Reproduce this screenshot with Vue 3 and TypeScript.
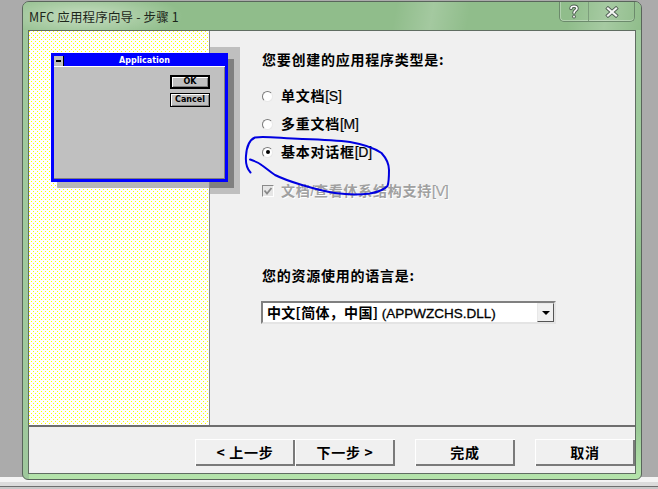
<script setup lang="ts">
const types = [
  { label: '单文档', key: '[S]', checked: false },
  { label: '多重文档', key: '[M]', checked: false },
  { label: '基本对话框', key: '[D]', checked: true },
]
const buttons = [
  { label: '< 上一步', cls: 'b-back' },
  { label: '下一步 >', cls: 'b-next' },
  { label: '完成', cls: 'b-finish' },
  { label: '取消', cls: 'b-cancel' },
]
</script>

<template>
  <div class="page">
    <div class="task-strip"></div>
    <div class="window">
      <div class="titlebar">
        <span class="title">MFC 应用程序向导 - 步骤 1</span>
        <div class="caption-btns">
          <span class="cap cap-help">
            <svg width="12" height="15" viewBox="0 0 12 15">
              <g fill="none" stroke-linecap="round">
                <path d="M3 4.500 C3 1.500 9 1.500 9 4.500 C9 6.500 6 6.500 6 9" stroke="#4c5a50" stroke-width="3.400" />
                <path d="M6 12.500 L6 12.700" stroke="#4c5a50" stroke-width="3.600" />
                <path d="M3 4.500 C3 1.500 9 1.500 9 4.500 C9 6.500 6 6.500 6 9" stroke="#fff" stroke-width="1.600" />
                <path d="M6 12.500 L6 12.700" stroke="#fff" stroke-width="1.800" />
              </g>
            </svg>
          </span>
          <span class="cap cap-close">
            <svg width="14" height="12" viewBox="0 0 14 12">
              <g fill="none" stroke-linecap="square">
                <path d="M3 2.500 L11 9.500 M11 2.500 L3 9.500" stroke="#4c5a50" stroke-width="3.800" />
                <path d="M3 2.500 L11 9.500 M11 2.500 L3 9.500" stroke="#f4f6f4" stroke-width="2.200" />
              </g>
            </svg>
          </span>
        </div>
      </div>
      <div class="client">
        <div class="main">
          <div class="left">
            <div class="mini-strip"></div>
            <div class="mini">
              <div class="mini-title">
                <span class="mini-sys"><i></i></span>
                <span class="mini-name">Application</span>
              </div>
              <div class="mini-body">
                <span class="mini-btn mini-ok">OK</span>
                <span class="mini-btn">Cancel</span>
              </div>
            </div>
          </div>
          <div class="right">
            <div class="shadow-light"></div>
            <div class="shadow-dark"></div>
            <div class="heading">您要创建的应用程序类型是:</div>
            <div class="radios">
              <div v-for="t in types" :key="t.label" class="radio-row">
                <span class="radio" :class="{ on: t.checked }"></span>
                <span class="opt">{{ t.label }}<span class="latin">{{ t.key }}</span></span>
              </div>
            </div>
            <div class="check-row">
              <span class="check">
                <svg width="10" height="10" viewBox="0 0 10 10"><path d="M1.500 4.500 L4 7.500 L8.500 2" fill="none" stroke="#8a8a8a" stroke-width="1.800" /></svg>
              </span>
              <span class="opt disabled">文档<span class="latin">/</span>查看体系结构支持<span class="latin">[V]</span></span>
            </div>
            <div class="heading lang">您的资源使用的语言是:</div>
            <div class="combo">
              <span class="combo-text">中文[简体，中国] <span class="latin latin-combo">(APPWZCHS.DLL)</span></span>
              <span class="combo-btn"><i></i></span>
            </div>
          </div>
        </div>
        <div class="bottom">
          <button v-for="b in buttons" :key="b.label" class="btn" :class="b.cls">{{ b.label }}</button>
        </div>
      </div>
    </div>
    <svg class="scribble" width="658" height="489" viewBox="0 0 658 489">
      <path d="M250.500 172.500 C246 168 245.500 162 246 156 C246.500 148 249 140 255 137.500 C264 136 278 138 302 139 C318 139.500 335 140 350 142 C362 144 374 148 381.500 153 C386 158 389 163 389 170 C389 177 389 182 387.500 186 C384 190 378 192 370 193.500 C358 195 346 194.500 335 193 C322 191 312 188 302 185 C292 182 283 179 275 175 C270 172 266 168 261.500 165 C258 162 254 161 250 159.500" fill="none" stroke="#0000e0" stroke-width="2" stroke-linecap="round" />
    </svg>
  </div>
</template>

<style>
html, body { margin: 0; padding: 0; background: #ababab; }
</style>

<style scoped>
.page {
  position: relative;
  width: 658px;
  height: 489px;
  overflow: hidden;
  background: #ababab;
  font-family: "Noto Sans CJK SC", "Liberation Sans", sans-serif;
  padding: 1px 0 0 22px;
  box-sizing: border-box;
}
.task-strip {
  position: absolute;
  left: 0;
  right: 0;
  top: 477px;
  height: 12px;
  background: linear-gradient(#f4f4f4 0 5px, #dcdcdc 5px 9px, #6e6e6e 9px 10px, #c8c8c8 10px);
}
.window {
  position: relative;
  width: 620px;
  height: 479px;
  box-sizing: border-box;
  border: 1px solid #59655b;
  border-radius: 7px 7px 6px 6px;
  padding: 0 5px 5px;
  background: linear-gradient(90deg, #9fc89c 0 6px, transparent 6px), linear-gradient(#a3cca1 0%, #9cc79a 40%, #88ba84 60%, #9ccb98 90%, #b5e4ab 100%);
}
.titlebar {
  display: flex;
  justify-content: space-between;
  height: 28px;
  margin: 0 -5px;
  padding: 0 6px;
  border-radius: 6px 6px 0 0;
  background:
    radial-gradient(ellipse 100px 24px at 60px 14px, rgba(220, 235, 215, 0.7), transparent),
    linear-gradient(100deg, transparent 60%, rgba(255, 255, 255, 0.18) 66%, transparent 72%, transparent 88%, rgba(255, 255, 255, 0.2) 94%, transparent),
    #90bd8b;
}
.title {
  font-size: 12.500px;
  line-height: 30px;
  letter-spacing: 0.15px;
  color: #1c261a;
}
.caption-btns {
  display: flex;
  height: 20px;
  box-sizing: border-box;
  border: 1px solid #6c8a6c;
  border-top: none;
  border-radius: 0 0 5px 5px;
  box-shadow: inset 0 -1px 0 rgba(255, 255, 255, 0.3), inset 1px 0 0 rgba(255, 255, 255, 0.3);
}
.cap {
  display: flex;
  align-items: center;
  justify-content: center;
}
.cap-help {
  width: 28px;
  border-right: 1px solid #7d9e7c;
}
.cap-close {
  width: 45px;
}
.client {
  display: flex;
  flex-direction: column;
  width: 608px;
  height: 444px;
  box-sizing: border-box;
  border: 1px solid #606d62;
  background: #f0f0f0;
}
.main {
  display: flex;
  height: 394px;
  border-bottom: 2px solid #6e6e6e;
  box-sizing: content-box;
}
.left {
  position: relative;
  z-index: 1;
  width: 181px;
  box-sizing: border-box;
  padding: 22px 0 0 22px;
  border-right: 1px solid #8a8a8a;
  background-color: #ffffff;
  background-image:
    conic-gradient(at 1px 1px, transparent 270deg, #ffff00 270deg),
    conic-gradient(at 1px 1px, transparent 270deg, #ffff00 270deg);
  background-size: 4px 4px;
  background-position: 0 0, 2px 2px;
}
.mini-strip {
  position: absolute;
  left: 28px;
  top: 151px;
  width: 152px;
  height: 6px;
  background: #b7b7b7;
}
.mini {
  position: relative;
  width: 177px;
  height: 129px;
  box-sizing: border-box;
  border: 3px solid #0000ff;
  display: flex;
  flex-direction: column;
  background: #c0c0c0;
  box-shadow: inset -1px -1px 0 #808080;
  font-family: "DejaVu Sans", sans-serif;
  font-weight: 700;
  color: #000;
}
.mini-title {
  position: relative;
  display: flex;
  align-items: center;
  height: 10px;
  background: #0000ff;
  border-bottom: 1px solid #fff;
  color: #fff;
}
.mini-sys {
  display: flex;
  align-items: center;
  justify-content: center;
  width: 9px;
  height: 10px;
  background: #c0c0c0;
  border-right: 1px solid #000;
}
.mini-sys i {
  display: block;
  width: 5px;
  height: 2px;
  background: #000;
}
.mini-name {
  flex: 1;
  text-align: center;
  font-size: 8px;
  line-height: 10px;
}
.mini-body {
  display: flex;
  flex-direction: column;
  align-items: flex-end;
  gap: 4px;
  padding: 8px 15px 0 0;
}
.mini-btn {
  width: 40px;
  height: 14px;
  box-sizing: border-box;
  border: 1px solid #000;
  text-align: center;
  font-size: 8px;
  line-height: 12px;
  box-shadow: inset 1px 1px 0 #fff, inset -1px -1px 0 #808080;
}
.mini-ok {
  border-width: 2px;
  line-height: 10px;
}
.right {
  position: relative;
  flex: 1;
  padding: 19px 0 0 52px;
  box-sizing: border-box;
  color: #000;
}
.shadow-light {
  position: absolute;
  left: 0;
  top: 16px;
  width: 30px;
  height: 147px;
  background: #bfbfbf;
}
.shadow-dark {
  position: absolute;
  left: 0;
  top: 28px;
  width: 24px;
  height: 129px;
  background: #808080;
}
.heading {
  position: relative;
  font-size: 14px;
  font-weight: 700;
  line-height: 18px;
  letter-spacing: 0.75px;
}
.radios {
  margin-top: 14px;
}
.radio-row {
  display: flex;
  align-items: center;
  height: 28px;
}
.radio {
  position: relative;
  width: 11px;
  height: 11px;
  margin-right: 8px;
  box-sizing: border-box;
  border-radius: 50%;
  border: 1px solid;
  border-color: #7a7a7a #e8e8e8 #e8e8e8 #7a7a7a;
  background: #fff;
}
.radio.on::after {
  content: "";
  position: absolute;
  left: 2.500px;
  top: 2.500px;
  width: 4px;
  height: 4px;
  border-radius: 50%;
  background: #000;
}
.opt {
  font-size: 14px;
  font-weight: 700;
  line-height: 18px;
  letter-spacing: 0.75px;
  margin-top: -2px;
}
.check-row {
  display: flex;
  align-items: center;
  height: 18px;
  margin-top: 16px;
}
.check {
  width: 12px;
  height: 12px;
  box-sizing: border-box;
  margin-right: 7px;
  border: 1px solid;
  border-color: #8a8a8a #fff #fff #8a8a8a;
  background: #e6e6e6;
  display: flex;
}
.disabled {
  color: #a0a0a0;
  text-shadow: 1px 1px 0 #fff;
}
.lang {
  margin-top: 66px;
}
.combo {
  display: flex;
  justify-content: space-between;
  width: 295px;
  height: 23px;
  box-sizing: border-box;
  margin: 17px 0 0 -1px;
  border: 2px solid;
  border-color: #808080 #e4e4e4 #e4e4e4 #808080;
  background: #fff;
}
.combo-text {
  padding-left: 4px;
  font-size: 14px;
  font-weight: 700;
  line-height: 19px;
  letter-spacing: 0.3px;
  white-space: nowrap;
}
.latin {
  font-family: "Liberation Sans", sans-serif;
  font-weight: 400;
  font-size: 14px;
  letter-spacing: -0.3px;
  -webkit-text-stroke: 0.2px currentColor;
}
.latin-combo {
  font-size: 13.500px;
  letter-spacing: 0;
  -webkit-text-stroke: 0.3px currentColor;
}
.combo-btn {
  display: flex;
  align-items: center;
  justify-content: center;
  width: 17px;
  height: 19px;
  box-sizing: border-box;
  border: 1px solid;
  border-color: #e8e8e8 #555 #555 #e8e8e8;
  background: #f0f0f0;
}
.combo-btn i {
  width: 0;
  height: 0;
  border-left: 4px solid transparent;
  border-right: 4px solid transparent;
  border-top: 4px solid #000;
}
.bottom {
  display: flex;
  justify-content: flex-end;
  align-items: flex-start;
  flex: 1;
  padding-top: 12px;
}
.btn {
  width: 100px;
  height: 27px;
  padding: 0 0 2px;
  border: 0;
  font-family: inherit;
  font-size: 14px;
  font-weight: 700;
  letter-spacing: 0.75px;
  color: #000;
  background: #f0f0f0;
  box-shadow: inset 1px 1px 0 #fff, inset -2px -2px 0 #7a7a7a;
}
.b-finish {
  margin-left: 20px;
}
.b-cancel {
  margin-left: 20px;
}
.scribble {
  position: absolute;
  left: 0;
  top: 0;
  z-index: 2;
  pointer-events: none;
}
</style>
